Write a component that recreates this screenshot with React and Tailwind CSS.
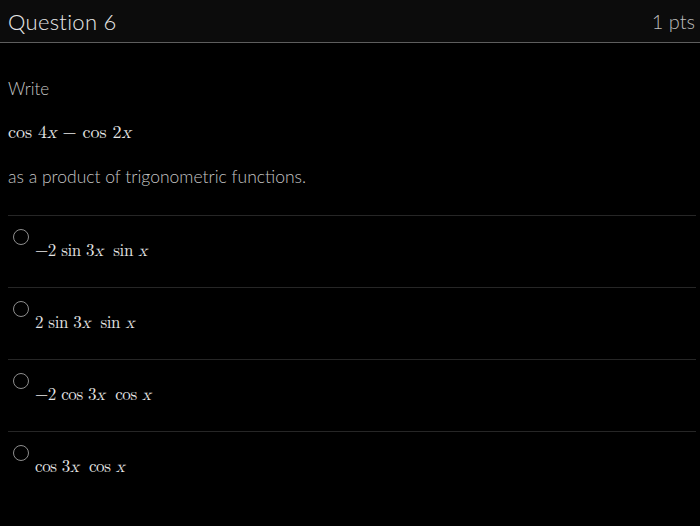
import React from "react";

const M = ({ children, size = "text-[18px]" }) => (
  <span className={`font-['Latin_Modern_Math','Liberation_Serif',serif] text-[#e6e6e6] ${size}`}>{children}</span>
);
const I = ({ children }) => <i className="italic">{children}</i>;

const options = [
  <>−2 sin 3<I>x</I>&nbsp; sin <I>x</I></>,
  <>2 sin 3<I>x</I>&nbsp; sin <I>x</I></>,
  <>−2 cos 3<I>x</I>&nbsp; cos <I>x</I></>,
  <>cos 3<I>x</I>&nbsp; cos <I>x</I></>,
];

export default function App() {
  return (
    <div className="w-[700px] h-[526px] bg-black font-['Lato',sans-serif] overflow-hidden">
      <div className="h-[43px] bg-[#0c0c0c] border-b border-[#5e5e5e] flex items-center justify-between pl-[8px] pr-[5px]">
        <span className="text-[22px] font-light text-[#e8e8e8] tracking-[0.3px]">Question 6</span>
        <span className="text-[20px] font-light text-[#bdbdbd]">1 pts</span>
      </div>
      <div className="px-[8px] pr-[4px]">
        <div className="pt-[36px] text-[17px] font-light text-[#c4c4c4] leading-[20px]">Write</div>
        <div className="mt-[22px] leading-[22px]"><M>cos 4<I>x</I> − cos 2<I>x</I></M></div>
        <div className="mt-[24px] text-[17.5px] font-light text-[#c4c4c4] leading-[20px]">as a product of trigonometric functions.</div>
        <div className="mt-[28px]">
          {options.map((o, i) => (
            <div key={i} className="border-t border-[#262626] h-[72px] flex">
              <div className="pt-[13px] pl-[5px]">
                <div className="w-[16px] h-[16px] rounded-full border-[1.5px] border-[#8e8e8e]"></div>
              </div>
              <div className="pt-[23px] pl-[6px] leading-[22px] tracking-[-0.4px]">
                <M size="text-[17px]">{o}</M>
              </div>
            </div>
          ))}
        </div>
      </div>
    </div>
  );
}
